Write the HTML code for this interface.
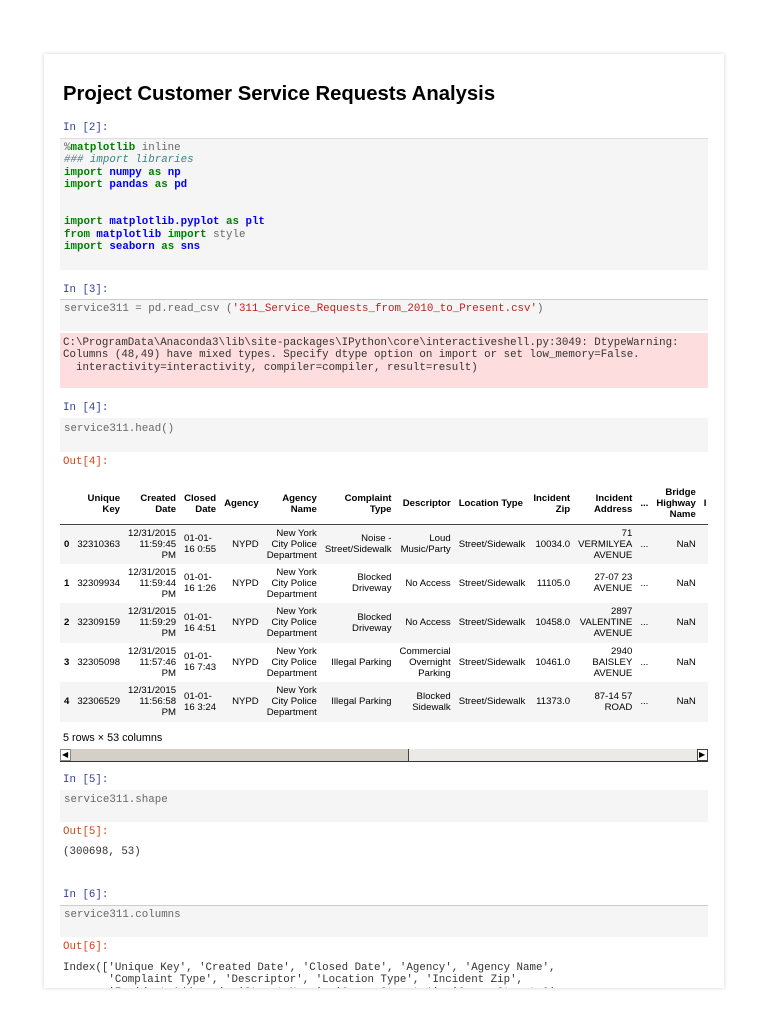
<!DOCTYPE html>
<html><head><meta charset="utf-8"><style>
*{margin:0;padding:0;box-sizing:border-box}
body{width:768px;height:1024px;background:#fff;position:relative;overflow:hidden;font-family:"Liberation Sans",sans-serif}
.card{position:absolute;left:44px;top:54px;width:680px;height:934px;background:#fff;box-shadow:0 0 4px rgba(0,0,0,.18)}
.a{position:absolute;white-space:pre}
.m{font-family:"Liberation Mono",monospace;font-size:10.8px;line-height:12.4px}
.pr{color:#303f9f}
.po{color:#d84315}
.box{position:absolute;left:60px;width:648px;background:#f5f5f5}
.k{color:#008000;font-weight:bold}
.n{color:#0000ff;font-weight:bold}
.c{color:#408080;font-style:italic}
.g{color:#666}
.s{color:#ba2121}
table{position:absolute;left:60px;top:482px;border-collapse:collapse;table-layout:fixed;font-size:9.6px;line-height:11px;color:#000}
td,th{text-align:right;padding:0 4px;vertical-align:middle;overflow:hidden;white-space:nowrap}
th{font-weight:bold;height:40px;border-bottom:1.5px solid #444}
tbody tr{height:39.5px}
tbody tr:nth-child(odd){background:#f5f5f5}
.wrap{position:absolute;left:60px;top:484px;width:648px;height:238px;overflow:hidden}
.wrap table{left:0;top:0}
</style></head><body>
<div class="card"></div>
<div class="a" style="left:63px;top:83px;font-size:20.3px;font-weight:bold;color:#000">Project Customer Service Requests Analysis</div>

<div class="a m pr" style="left:63px;top:122px">In [2]:</div>
<div class="box" style="top:138px;height:132px;border-top:1px solid #ddd"></div>
<div class="a m" style="left:64px;top:142px"><span class="g">%</span><span class="k">matplotlib</span> <span class="g">inline</span>
<span class="c">### import libraries</span>
<span class="k">import</span> <span class="n">numpy</span> <span class="k">as</span> <span class="n">np</span>
<span class="k">import</span> <span class="n">pandas</span> <span class="k">as</span> <span class="n">pd</span>


<span class="k">import</span> <span class="n">matplotlib.pyplot</span> <span class="k">as</span> <span class="n">plt</span>
<span class="k">from</span> <span class="n">matplotlib</span> <span class="k">import</span> <span class="g">style</span>
<span class="k">import</span> <span class="n">seaborn</span> <span class="k">as</span> <span class="n">sns</span></div>

<div class="a m pr" style="left:63px;top:284px">In [3]:</div>
<div class="box" style="top:299px;height:32px;border-top:1px solid #ccc"></div>
<div class="a m g" style="left:64px;top:303px">service311 = pd.read_csv (<span class="s">'311_Service_Requests_from_2010_to_Present.csv'</span>)</div>
<div class="box" style="top:333px;height:55px;background:#fddddd"></div>
<div class="a m" style="left:63px;top:337px;color:#333">C:\ProgramData\Anaconda3\lib\site-packages\IPython\core\interactiveshell.py:3049: DtypeWarning:
Columns (48,49) have mixed types. Specify dtype option on import or set low_memory=False.
  interactivity=interactivity, compiler=compiler, result=result)</div>

<div class="a m pr" style="left:63px;top:402px">In [4]:</div>
<div class="box" style="top:418px;height:34px"></div>
<div class="a m g" style="left:64px;top:423px">service311.head()</div>
<div class="a m po" style="left:63px;top:456px">Out[4]:</div>

<div class="wrap"><table>
<colgroup><col style="width:18px"><col style="width:50px"><col style="width:59px"><col style="width:40px"><col style="width:44px"><col style="width:57px"><col style="width:73px"><col style="width:60px"><col style="width:74px"><col style="width:44px"><col style="width:64px"><col style="width:12px"><col style="width:54px"><col style="width:30px"></colgroup>
<thead><tr><th></th><th>Unique<br>Key</th><th>Created<br>Date</th><th>Closed<br>Date</th><th>Agency</th><th>Agency<br>Name</th><th>Complaint<br>Type</th><th>Descriptor</th><th style="text-align:left">Location Type</th><th>Incident<br>Zip</th><th>Incident<br>Address</th><th>...</th><th>Bridge<br>Highway<br>Name</th><th style="text-align:left">I</th></tr></thead>
<tbody>
<tr><th style="border:0;height:auto">0</th><td>32310363</td><td>12/31/2015<br>11:59:45<br>PM</td><td style="text-align:left">01-01-<br>16 0:55</td><td>NYPD</td><td>New York<br>City Police<br>Department</td><td>Noise -<br>Street/Sidewalk</td><td>Loud<br>Music/Party</td><td style="text-align:left">Street/Sidewalk</td><td>10034.0</td><td>71<br>VERMILYEA<br>AVENUE</td><td>...</td><td>NaN</td><td></td></tr>
<tr><th style="border:0;height:auto">1</th><td>32309934</td><td>12/31/2015<br>11:59:44<br>PM</td><td style="text-align:left">01-01-<br>16 1:26</td><td>NYPD</td><td>New York<br>City Police<br>Department</td><td>Blocked<br>Driveway</td><td>No Access</td><td style="text-align:left">Street/Sidewalk</td><td>11105.0</td><td>27-07 23<br>AVENUE</td><td>...</td><td>NaN</td><td></td></tr>
<tr><th style="border:0;height:auto">2</th><td>32309159</td><td>12/31/2015<br>11:59:29<br>PM</td><td style="text-align:left">01-01-<br>16 4:51</td><td>NYPD</td><td>New York<br>City Police<br>Department</td><td>Blocked<br>Driveway</td><td>No Access</td><td style="text-align:left">Street/Sidewalk</td><td>10458.0</td><td>2897<br>VALENTINE<br>AVENUE</td><td>...</td><td>NaN</td><td></td></tr>
<tr><th style="border:0;height:auto">3</th><td>32305098</td><td>12/31/2015<br>11:57:46<br>PM</td><td style="text-align:left">01-01-<br>16 7:43</td><td>NYPD</td><td>New York<br>City Police<br>Department</td><td>Illegal Parking</td><td>Commercial<br>Overnight<br>Parking</td><td style="text-align:left">Street/Sidewalk</td><td>10461.0</td><td>2940<br>BAISLEY<br>AVENUE</td><td>...</td><td>NaN</td><td></td></tr>
<tr><th style="border:0;height:auto">4</th><td>32306529</td><td>12/31/2015<br>11:56:58<br>PM</td><td style="text-align:left">01-01-<br>16 3:24</td><td>NYPD</td><td>New York<br>City Police<br>Department</td><td>Illegal Parking</td><td>Blocked<br>Sidewalk</td><td style="text-align:left">Street/Sidewalk</td><td>11373.0</td><td>87-14 57<br>ROAD</td><td>...</td><td>NaN</td><td></td></tr>
</tbody></table></div>

<div class="a" style="left:63px;top:732px;font-size:10.8px;color:#000">5 rows × 53 columns</div>
<div style="position:absolute;left:60px;top:749px;width:648px;height:13px;background:#eceae6;border-bottom:1.5px solid #333"></div>
<div style="position:absolute;left:60px;top:749px;width:11px;height:12px;background:#fff;border:1px solid #888"></div>
<div class="a" style="left:62px;top:750px;font-size:8px">◀</div>
<div style="position:absolute;left:71px;top:749px;width:338px;height:12px;background:#d4d0c8;border-right:1px solid #444"></div>
<div style="position:absolute;left:697px;top:749px;width:11px;height:12px;background:#fff;border:1px solid #444"></div>
<div class="a" style="left:699px;top:750px;font-size:8px">▶</div>

<div class="a m pr" style="left:63px;top:774px">In [5]:</div>
<div class="box" style="top:790px;height:32px"></div>
<div class="a m g" style="left:64px;top:794px">service311.shape</div>
<div class="a m po" style="left:63px;top:826px">Out[5]:</div>
<div class="a m" style="left:63px;top:846px;color:#333">(300698, 53)</div>

<div class="a m pr" style="left:63px;top:889px">In [6]:</div>
<div class="box" style="top:905px;height:32px;border-top:1px solid #ccc"></div>
<div class="a m g" style="left:64px;top:909px">service311.columns</div>
<div class="a m po" style="left:63px;top:941px">Out[6]:</div>
<div style="position:absolute;left:44px;top:955px;width:680px;height:33px;overflow:hidden">
<div class="a m" style="left:19px;top:7px;color:#333">Index(['Unique Key', 'Created Date', 'Closed Date', 'Agency', 'Agency Name',
       'Complaint Type', 'Descriptor', 'Location Type', 'Incident Zip',
       'Incident Address', 'Street Name', 'Cross Street 1', 'Cross Street 2',</div></div>
</body></html>
